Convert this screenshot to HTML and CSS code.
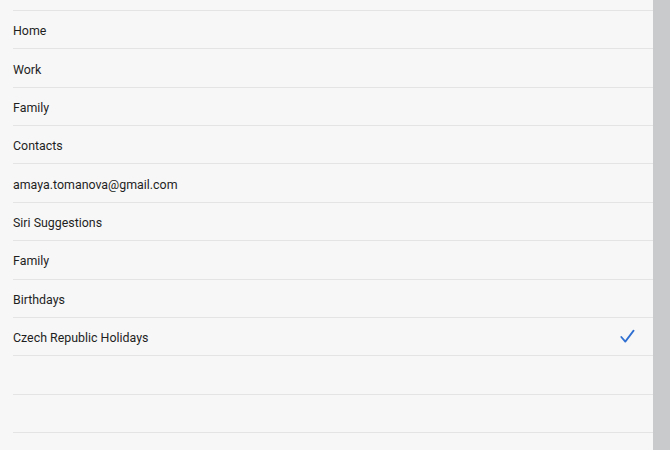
FILE: index.html
```html
<!DOCTYPE html>
<html>
<head>
<meta charset="utf-8">
<link rel="stylesheet" href="styles.css">
</head>
<body>
<div class="page">
  <div class="list">
    <div class="top"></div>
    <div class="row"><span>Home</span></div>
    <div class="row"><span>Work</span></div>
    <div class="row"><span>Family</span></div>
    <div class="row"><span>Contacts</span></div>
    <div class="row"><span>amaya.tomanova@gmail.com</span></div>
    <div class="row"><span>Siri Suggestions</span></div>
    <div class="row"><span>Family</span></div>
    <div class="row"><span>Birthdays</span></div>
    <div class="row"><span>Czech Republic Holidays</span>
      <svg class="check" width="15" height="15" viewBox="0 0 15 15"><path d="M1.3 8 L5.3 12.6 L13.6 1.6" fill="none" stroke="#2f6fd1" stroke-width="1.8" stroke-linecap="round" stroke-linejoin="round"/></svg>
    </div>
    <div class="row"></div>
    <div class="row"></div>
    <div class="row"></div>
  </div>
  <div class="scroll"></div>
</div>
</body>
</html>
```

FILE: styles.css
```css
html, body {
  margin: 0;
  padding: 0;
  height: 100%;
  overflow: hidden;
}
body {
  background: #f7f7f7;
  font-family: Roboto, "Liberation Sans", sans-serif;
  color: #1f1f1f;
}
.page {
  display: flex;
  height: 450px;
}
.list {
  flex: 1;
  padding-left: 13px;
  display: flex;
  flex-direction: column;
}
.top {
  height: 11px;
  flex: none;
  box-sizing: border-box;
  border-bottom: 1px solid #e4e4e4;
}
.row {
  flex: none;
  height: 38.36px;
  box-sizing: border-box;
  border-bottom: 1px solid #e4e4e4;
  display: flex;
  align-items: center;
  justify-content: space-between;
  padding-right: 18px;
  padding-top: 2px;
  font-size: 12.4px;
}
.check {
  display: block;
  margin-bottom: 2px;
}
.scroll {
  width: 17px;
  flex: none;
  background: #c8cacc;
}
```
